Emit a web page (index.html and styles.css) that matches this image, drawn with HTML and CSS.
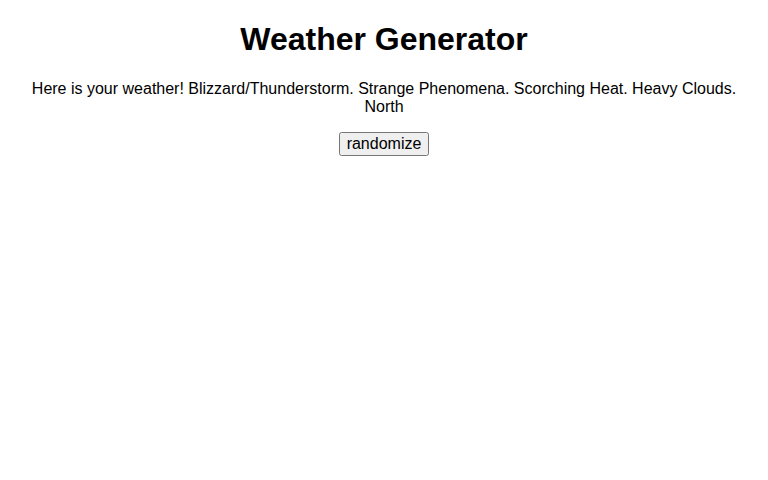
FILE: index.html
```html
<!DOCTYPE html>
<html>
<head>
<meta charset="utf-8">
<link rel="stylesheet" href="styles.css">
</head>
<body>
<div class="app">
  <h1 class="title">Weather Generator</h1>
  <p class="weather">Here is your weather! Blizzard/Thunderstorm. Strange Phenomena. Scorching Heat. Heavy Clouds. North</p>
  <button class="randomize">randomize</button>
</div>
</body>
</html>
```
FILE: styles.css
```css
body {
  margin: 0;
  font-family: "Liberation Sans", Arial, sans-serif;
  background: #fff;
  color: #000;
}
.app {
  text-align: center;
  padding: 0 16px;
}
.title {
  font-size: 32px;
  font-weight: bold;
  margin: 21.44px 0;
}
.weather {
  font-size: 16px;
  margin: 16px 0;
}
.randomize {
  font-family: "Liberation Sans", Arial, sans-serif;
  font-size: 16px;
}
```
